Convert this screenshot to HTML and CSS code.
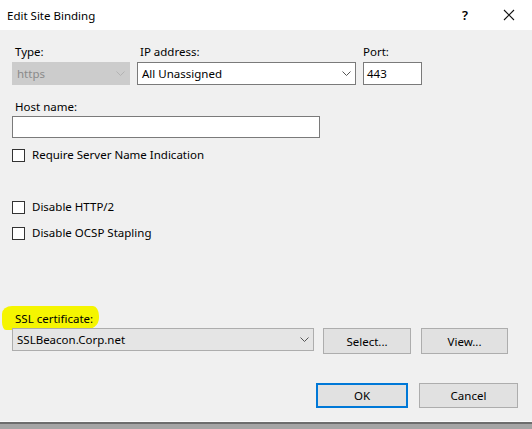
FILE: index.html
```html
<!DOCTYPE html>
<html>
<head>
<meta charset="utf-8">
<link rel="stylesheet" href="styles.css">
</head>
<body>
<div class="dialog">
  <div class="titlebar">
    <span class="title">Edit Site Binding</span>
    <span class="help">?</span>
    <span class="close">
      <svg width="12" height="12" viewBox="0 0 12 12"><path d="M1 1L11 11M11 1L1 11" stroke="#111" stroke-width="1.1" fill="none"/></svg>
    </span>
  </div>
  <div class="content">
    <div class="row-top">
      <div class="field f-type">
        <label class="lbl">Type:</label>
        <div class="combo disabled"><span class="val">https</span>
          <svg class="chev" width="9" height="5" viewBox="0 0 9 5"><path d="M0.5 0.5L4.5 4.5L8.5 0.5" stroke="#b3b3b3" fill="none"/></svg>
        </div>
      </div>
      <div class="field f-ip">
        <label class="lbl">IP address:</label>
        <div class="combo edit"><span class="val">All Unassigned</span>
          <svg class="chev" width="9" height="5" viewBox="0 0 9 5"><path d="M0.5 0.5L4.5 4.5L8.5 0.5" stroke="#555" fill="none"/></svg>
        </div>
      </div>
      <div class="field f-port">
        <label class="lbl lbl-port">Port:</label>
        <div class="textbox"><span class="val">443</span></div>
      </div>
    </div>
    <div class="host">
      <label class="lbl">Host name:</label>
      <div class="textbox host-box"></div>
    </div>
    <div class="check c-sni"><span class="box"></span><span>Require Server Name Indication</span></div>
    <div class="check c-http2"><span class="box"></span><span>Disable HTTP/2</span></div>
    <div class="check c-ocsp"><span class="box"></span><span>Disable OCSP Stapling</span></div>
    <div class="ssl">
      <label class="lbl hl">SSL certificate:</label>
      <div class="ssl-row">
        <div class="combo btncombo"><span class="val">SSLBeacon.Corp.net</span>
          <svg class="chev" width="9" height="5" viewBox="0 0 9 5"><path d="M0.5 0.5L4.5 4.5L8.5 0.5" stroke="#555" fill="none"/></svg>
        </div>
        <button class="btn b-select">Select...</button>
        <button class="btn b-view">View...</button>
      </div>
    </div>
    <div class="actions">
      <button class="btn b-ok">OK</button>
      <button class="btn b-cancel">Cancel</button>
    </div>
  </div>
  <div class="edge"></div>
</div>
</body>
</html>
```

FILE: styles.css
```css
html, body {
  margin: 0;
  padding: 0;
}
body {
  width: 532px;
  height: 429px;
  overflow: hidden;
  background: #a5a5a5;
  font-family: "Noto Sans", "Open Sans", sans-serif;
  font-size: 11.5px;
  color: #000;
}
.dialog {
  display: flex;
  flex-direction: column;
  width: 532px;
}
.titlebar {
  height: 30px;
  background: #fff;
  display: flex;
  align-items: center;
}
.title {
  padding-left: 7px;
  flex: 1;
}
.help {
  width: 12px;
  text-align: center;
  margin-right: 32px;
  font-size: 13px;
  font-weight: 600;
}
.close {
  width: 12px;
  height: 12px;
  margin-right: 17px;
  display: flex;
}
.content {
  background: #f0f0f0;
  height: 392px;
  padding: 14px 0 0 12px;
  box-sizing: border-box;
  border-bottom: 1px solid #fafafa;
}
.edge {
  height: 2px;
  background: #6d6d6d;
}
.lbl {
  display: block;
  line-height: 16px;
  height: 16px;
  padding-left: 3px;
}
.lbl-port { padding-left: 0; }
.row-top {
  display: flex;
  gap: 7px;
}
.field {
  display: flex;
  flex-direction: column;
  gap: 2px;
}
.f-type { width: 118px; }
.f-ip { width: 219px; }
.f-port { width: 59px; }
.combo {
  position: relative;
  height: 23px;
  box-sizing: border-box;
  display: flex;
  align-items: center;
  padding-left: 4px;
}
.combo .val { line-height: 16px; }
.chev {
  margin-left: auto;
  margin-right: 4px;
}
.combo.disabled {
  background: #cccccc;
  border: 1px solid #cccccc;
  color: #8a8a8a;
}
.combo.edit {
  background: #fff;
  border: 1px solid #7a7a7a;
}
.textbox {
  height: 23px;
  box-sizing: border-box;
  background: #fff;
  border: 1px solid #7a7a7a;
  display: flex;
  align-items: center;
  padding-left: 3px;
}
.host {
  margin-top: 14px;
  display: flex;
  flex-direction: column;
  gap: 1px;
}
.host-box {
  width: 308px;
  height: 22px;
}
.check {
  display: flex;
  align-items: center;
  gap: 7px;
  height: 16px;
  line-height: 16px;
}
.check .box {
  width: 13px;
  height: 13px;
  box-sizing: border-box;
  border: 1px solid #333;
  background: #fff;
}
.c-sni { margin-top: 9px; }
.c-http2 { margin-top: 36px; }
.c-ocsp { margin-top: 10px; }
.ssl {
  margin-top: 70px;
}
.hl {
  position: relative;
  z-index: 0;
  width: max-content;
}
.hl::before {
  content: "";
  position: absolute;
  left: -10px;
  top: -5px;
  width: 97px;
  height: 24px;
  background: #f5f500;
  border-radius: 10px 6px 14px 4px / 8px 10px 12px 8px;
  z-index: -1;
}
.ssl-row {
  margin-top: 1px;
  display: flex;
  align-items: flex-start;
}
.btncombo {
  width: 302px;
  background: #e5e5e5;
  border: 1px solid #adadad;
}
.btn {
  font-family: inherit;
  font-size: 11.5px;
  color: #000;
  background: #e1e1e1;
  border: 1px solid #adadad;
  height: 26px;
  padding: 0;
  margin: 0;
  box-sizing: border-box;
}
.b-select { width: 88px; margin-left: 9px; }
.b-view { width: 87px; margin-left: 10px; }
.actions {
  margin-top: 29px;
  display: flex;
  padding-left: 304px;
  gap: 11px;
}
.b-ok {
  width: 92px;
  height: 25px;
  border: 1px solid #0078d7;
  box-shadow: inset 0 0 0 1px #0078d7;
}
.b-cancel {
  width: 99px;
  height: 25px;
}
```
